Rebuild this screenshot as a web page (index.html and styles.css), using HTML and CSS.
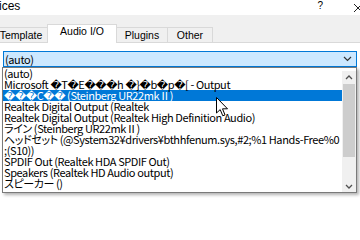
FILE: index.html
```html
<!DOCTYPE html>
<html>
<head>
<meta charset="utf-8">
<link rel="stylesheet" href="styles.css">
</head>
<body>
<div class="titlebar">
  <span class="title">ices</span>
  <span class="tb-btns">
    <span class="help">?</span>
    <svg class="close" width="10" height="10" viewBox="0 0 10 10"><path d="M1 1 L9 9 M9 1 L1 9" stroke="#222" stroke-width="1" fill="none"/></svg>
  </span>
</div>
<div class="chrome">
  <div class="tabs">
    <div class="tab t1">Template</div>
    <div class="tab sel t2">Audio I/O</div>
    <div class="tab t3">Plugins</div>
    <div class="tab t4">Other</div>
  </div>
</div>
<div class="panel">
  <div class="combo">
    <span class="combo-text">(auto)</span>
    <svg class="chev" width="9" height="6" viewBox="0 0 9 6"><path d="M1 1 L4.5 4.5 L8 1" stroke="#333" stroke-width="1.2" fill="none"/></svg>
  </div>
  <div class="drop">
    <ul class="items">
      <li>(auto)</li>
      <li>Microsoft �T�E���h �}�b�p�[ - Output</li>
      <li class="selected">���C�� (Steinberg UR22mkⅡ)</li>
      <li>Realtek Digital Output (Realtek</li>
      <li>Realtek Digital Output (Realtek High Definition Audio)</li>
      <li>ライン (Steinberg UR22mkⅡ)</li>
      <li>ヘッドセット (@System32¥drivers¥bthhfenum.sys,#2;%1 Hands-Free%0<br>;(S10))</li>
      <li>SPDIF Out (Realtek HDA SPDIF Out)</li>
      <li>Speakers (Realtek HD Audio output)</li>
      <li>スピーカー ()</li>
    </ul>
    <div class="sb">
      <div class="sb-btn up"><svg width="8" height="5" viewBox="0 0 8 5"><path d="M1 4 L4 1 L7 4" stroke="#505050" stroke-width="1.3" fill="none"/></svg></div>
      <div class="sb-thumb"></div>
      <div class="sb-track"></div>
      <div class="sb-btn down"><svg width="8" height="5" viewBox="0 0 8 5"><path d="M1 1 L4 4 L7 1" stroke="#505050" stroke-width="1.3" fill="none"/></svg></div>
    </div>
  </div>
</div>
<svg class="cursor" width="13" height="20" viewBox="0 0 13 20"><path d="M0.5 0.5 L0.5 16 L4.2 12.6 L6.8 18.8 L9 17.9 L6.5 11.8 L11.5 11.8 Z" fill="#fff" stroke="#000" stroke-width="1" stroke-linejoin="miter"/></svg>
</body>
</html>
```

FILE: styles.css
```css
html, body {
  margin: 0;
  padding: 0;
}
body {
  width: 360px;
  height: 240px;
  overflow: hidden;
  background: #fff;
  font-family: "Liberation Sans", Arial, sans-serif;
  color: #000;
  position: relative;
}
.titlebar {
  height: 15px;
  display: flex;
  justify-content: space-between;
  font-size: 12px;
  line-height: 12px;
  background: #fff;
}
.title {
  margin-left: -1px;
}
.tb-btns {
  display: flex;
  align-items: flex-start;
}
.help {
  font-size: 10px;
  line-height: 12px;
  margin-right: 30px;
}
.close {
  margin-top: 3px;
  margin-right: -3px;
}
.chrome {
  height: 27px;
  background: #f0f0f0;
  display: flex;
  align-items: flex-end;
}
.tabs {
  display: flex;
  align-items: flex-end;
  margin-left: -6px;
}
.tab {
  box-sizing: border-box;
  height: 15px;
  border-top: 1px solid #d9d9d9;
  border-right: 1px solid #d9d9d9;
  font-size: 10.5px;
  line-height: 14px;
  text-align: center;
  background: #f0f0f0;
}
.t1 { width: 54px; border-left: 1px solid #d9d9d9; }
.t2 { width: 70px; }
.t3 { width: 51px; }
.t4 { width: 45px; }
.tab.sel {
  height: 19px;
  background: #fff;
  border-left: 1px solid #d9d9d9;
  margin-left: -1px;
  margin-bottom: -1px;
  line-height: 12px;
  position: relative;
  z-index: 1;
}
.panel {
  border-top: 1px solid #d9d9d9;
  background: #fff;
  height: 197px;
}
.combo {
  box-sizing: border-box;
  margin: 8px 3px 0 3px;
  height: 16px;
  border: 1px solid #0078d7;
  background: #cce8ff;
  display: flex;
  align-items: center;
  justify-content: space-between;
  padding: 0 4px 0 1px;
  font-family: "Noto Sans CJK JP", "DejaVu Sans", sans-serif;
  font-size: 11px;
  line-height: 11px;
  letter-spacing: -0.4px;
}
.drop {
  box-sizing: border-box;
  margin-left: 2px;
  width: 355px;
  height: 126px;
  border: 1px solid #7a7a7a;
  background: #fff;
  box-shadow: 2px 2px 3px rgba(0,0,0,0.3);
  display: flex;
}
.items {
  flex: 1;
  list-style: none;
  margin: 0;
  padding: 0;
  font-family: "Noto Sans CJK JP", "DejaVu Sans", sans-serif;
  font-feature-settings: "palt";
  font-size: 11px;
  line-height: 11px;
  letter-spacing: -0.4px;
  white-space: nowrap;
}
.items li {
  padding-left: 1px;
}
.items li.selected {
  background: #0078d7;
  color: #fff;
}
.sb {
  width: 14px;
  margin-top: 3px;
  background: #f0f0f0;
  display: flex;
  flex-direction: column;
}
.sb-btn {
  height: 13px;
  display: flex;
  align-items: center;
  justify-content: center;
}
.sb-btn.down {
  height: 12px;
}
.sb-thumb {
  height: 73px;
  margin: 0 1px;
  background: #cdcdcd;
}
.sb-track {
  flex: 1;
}
.cursor {
  position: absolute;
  left: 216px;
  top: 97px;
}
```
